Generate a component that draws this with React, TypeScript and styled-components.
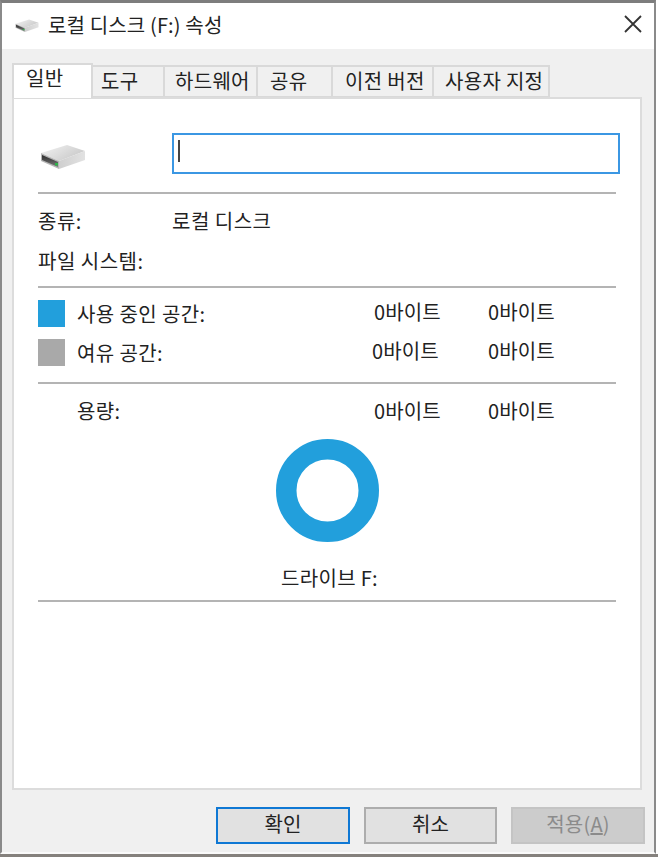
import React from 'react';
import styled, { createGlobalStyle } from 'styled-components';

const Global = createGlobalStyle`
  html, body { margin: 0; padding: 0; background: #fff; }
  body { font-family: "Noto Sans CJK KR", "Noto Sans", sans-serif; color: #222; }
  #root { width: 658px; height: 857px; display: flex; flex-direction: column; }
`;

const Window = styled.div`
  box-sizing: border-box;
  width: 656px;
  height: 854px;
  flex: none;
  border: 2px solid #8a8a8a;
  border-top: 3px solid #7d7d7d;
  border-bottom: 2px solid #fafafa;
  background: #f0f0f0;
  display: flex;
  flex-direction: column;
`;

const DesktopEdge = styled.div`
  height: 3px;
  flex: none;
  background: #85817d;
`;

const TitleBar = styled.div`
  height: 46px;
  flex: none;
  background: #fff;
  display: flex;
  align-items: center;
  padding: 0 12px 0 13px;
  gap: 9px;
`;

const TitleText = styled.span`
  font-size: 20px;
  line-height: 46px;
  letter-spacing: 0.15px;
  flex: 1;
  margin-top: -3px;
`;

const CloseButton = styled.span`
  display: flex;
  margin-top: -5px;
`;

const Body = styled.div`
  flex: 1;
  display: flex;
  flex-direction: column;
  padding: 14px 9px 0 10px;
`;

const TabStrip = styled.div`
  display: flex;
  align-items: flex-end;
  height: 35px;
  position: relative;
  z-index: 1;
  margin-bottom: -1px;
`;

const Tab = styled.div<{ $w: number; $pad: number; $active?: boolean }>`
  box-sizing: border-box;
  width: ${p => p.$w}px;
  height: ${p => (p.$active ? 35 : 32)}px;
  margin-bottom: ${p => (p.$active ? 0 : 1)}px;
  padding-left: ${p => p.$pad}px;
  border: 2px solid #d9d9d9;
  border-left-width: ${p => (p.$active ? 2 : 0)}px;
  border-bottom-width: ${p => (p.$active ? 0 : 1)}px;
  background: ${p => (p.$active ? '#fff' : '#f0f0f0')};
  font-size: 20px;
  letter-spacing: 0.3px;
  line-height: ${p => (p.$active ? 25 : 27)}px;
  white-space: nowrap;
`;

const Panel = styled.div`
  box-sizing: border-box;
  width: 630px;
  height: 693px;
  border: 2px solid #dcdcdc;
  background: #fff;
  padding: 34px 24px 0 24px;
  display: flex;
  flex-direction: column;
`;

const NameRow = styled.div`
  display: flex;
  align-items: center;
  height: 40px;
`;

const DriveBox = styled.div`
  width: 134px;
  flex: none;
  padding-left: 2px;
  box-sizing: border-box;
  display: flex;
  align-items: center;
  padding-top: 8px;
`;

const NameInput = styled.div`
  box-sizing: border-box;
  width: 448px;
  height: 41px;
  flex: none;
  margin-right: -4px;
  border: 2px solid #3b97e3;
  display: flex;
  align-items: center;
  padding: 0 0 4px 4px;
`;

const Caret = styled.span`
  width: 2px;
  height: 22px;
  background: #444;
`;

const Rule = styled.div<{ $top: number }>`
  height: 2px;
  flex: none;
  margin-top: ${p => p.$top}px;
  width: 578px;
  background: #b4b4b4;
`;

const InfoRow = styled.div<{ $top: number }>`
  display: flex;
  height: 26px;
  align-items: center;
  margin-top: ${p => p.$top}px;
  font-size: 20px;
  line-height: 20px;
  letter-spacing: 0.5px;
  white-space: nowrap;
`;

const InfoLabel = styled.span`
  width: 134px;
  flex: none;
`;

const UsageGrid = styled.div<{ $top: number }>`
  display: grid;
  grid-template-columns: 40px 296px 114px 100px;
  align-items: center;
  height: 27px;
  margin-top: ${p => p.$top}px;
  font-size: 20px;
  line-height: 20px;
  letter-spacing: 0.1px;
  white-space: nowrap;
`;

const Swatch = styled.span<{ $color?: string }>`
  width: 27px;
  height: 27px;
  background: ${p => p.$color || 'transparent'};
  display: block;
`;

const UsageLabel = styled.span`
  letter-spacing: 0.4px;
  margin-left: -1px;
`;

const Value = styled.span<{ $shift?: number; $lift?: number }>`
  margin-left: ${p => p.$shift || 0}px;
  margin-bottom: ${p => p.$lift || 0}px;
`;

const DonutWrap = styled.div`
  display: flex;
  justify-content: center;
  margin-top: 15px;
  width: 578px;
`;

const DriveLabel = styled.div`
  box-sizing: border-box;
  width: 578px;
  padding-left: 5px;
  text-align: center;
  font-size: 20px;
  letter-spacing: 0.3px;
  line-height: 26px;
  margin-top: 23px;
`;

const Footer = styled.div`
  display: flex;
  justify-content: flex-end;
  gap: 14px;
  margin-top: 17px;
`;

const Btn = styled.div<{ $w: number; $primary?: boolean; $disabled?: boolean }>`
  box-sizing: border-box;
  width: ${p => p.$w}px;
  height: 37px;
  background: ${p => (p.$disabled ? '#cccccc' : '#e1e1e1')};
  border: 2px solid ${p => (p.$primary ? '#0f78d4' : p.$disabled ? '#c4c4c4' : '#adadad')};
  box-shadow: ${p => (p.$primary ? 'inset 0 0 0 1px #e1e1e1' : 'none')};
  color: ${p => (p.$disabled ? '#8b8b8b' : '#222')};
  font-size: 20px;
  letter-spacing: 0.2px;
  line-height: 30px;
  text-align: center;
`;

const Underlined = styled.span`
  text-decoration: underline;
`;

const DriveIcon = ({ id, width }: { id: string; width: number }) => (
  <svg width={width} height={(width * 26) / 46} viewBox="0 0 46 26">
    <defs>
      <linearGradient id={`${id}-top`} x1="0" y1="0" x2="1" y2="0.6">
        <stop offset="0" stopColor="#f4f4f4" />
        <stop offset="1" stopColor="#c9c9c9" />
      </linearGradient>
      <linearGradient id={`${id}-side`} x1="0" y1="0" x2="1" y2="0">
        <stop offset="0" stopColor="#cfcfcf" />
        <stop offset="1" stopColor="#e2e2e2" />
      </linearGradient>
      <linearGradient id={`${id}-front`} x1="0" y1="0" x2="0" y2="1">
        <stop offset="0" stopColor="#2b2b2b" />
        <stop offset="1" stopColor="#7c7c7c" />
      </linearGradient>
      <filter id={`${id}-soft`} x="-5%" y="-5%" width="110%" height="110%">
        <feGaussianBlur stdDeviation="0.4" />
      </filter>
    </defs>
    <g filter={`url(#${id}-soft)`}>
      <path d="M1 9 L27 1 L45 7 L19 17 Z" fill={`url(#${id}-top)`} />
      <path d="M19 17 L45 7 L45 16 L19 25 Z" fill={`url(#${id}-side)`} />
      <path d="M1 9 L19 17 L19 25 L1 17 Z" fill="#b5b5b5" />
      <path d="M2 11 L18 18 L18 23 L2 16 Z" fill={`url(#${id}-front)`} />
      <rect x="15" y="19" width="3" height="2.5" fill="#2fb54a" />
    </g>
  </svg>
);

const CloseIcon = () => (
  <svg width="18" height="18" viewBox="0 0 18 18">
    <path d="M1 1 L17 17 M17 1 L1 17" stroke="#333" strokeWidth="1.8" fill="none" />
  </svg>
);

const Donut = () => (
  <svg width="103" height="103" viewBox="0 0 103 103">
    <circle cx="51.5" cy="51.5" r="41.25" fill="none" stroke="#229fdc" strokeWidth="20.5" />
  </svg>
);

export default function App() {
  return (
    <>
      <Global />
      <Window>
        <TitleBar>
          <DriveIcon id="small" width={24} />
          <TitleText>로컬 디스크 (F:) 속성</TitleText>
          <CloseButton><CloseIcon /></CloseButton>
        </TitleBar>
        <Body>
          <TabStrip>
            <Tab $w={81} $pad={12} $active>일반</Tab>
            <Tab $w={72} $pad={8}>도구</Tab>
            <Tab $w={93} $pad={10}>하드웨어</Tab>
            <Tab $w={75} $pad={12}>공유</Tab>
            <Tab $w={101} $pad={12}>이전 버전</Tab>
            <Tab $w={116} $pad={11}>사용자 지정</Tab>
          </TabStrip>
          <Panel>
            <NameRow>
              <DriveBox><DriveIcon id="large" width={46} /></DriveBox>
              <NameInput><Caret /></NameInput>
            </NameRow>
            <Rule $top={19} />
            <InfoRow $top={14}>
              <InfoLabel>종류:</InfoLabel>
              <span>로컬 디스크</span>
            </InfoRow>
            <InfoRow $top={14}>
              <InfoLabel>파일 시스템:</InfoLabel>
            </InfoRow>
            <Rule $top={12} />
            <UsageGrid $top={12}>
              <Swatch $color="#229fdc" />
              <UsageLabel>사용 중인 공간:</UsageLabel>
              <Value $lift={3}>0바이트</Value>
              <Value $lift={3}>0바이트</Value>
            </UsageGrid>
            <UsageGrid $top={12}>
              <Swatch $color="#a9a9a9" />
              <UsageLabel>여유 공간:</UsageLabel>
              <Value $shift={-2} $lift={3}>0바이트</Value>
              <Value $lift={3}>0바이트</Value>
            </UsageGrid>
            <Rule $top={16} />
            <UsageGrid $top={13}>
              <Swatch />
              <UsageLabel>용량:</UsageLabel>
              <Value>0바이트</Value>
              <Value>0바이트</Value>
            </UsageGrid>
            <DonutWrap><Donut /></DonutWrap>
            <DriveLabel>드라이브 F:</DriveLabel>
            <Rule $top={9} />
          </Panel>
          <Footer>
            <Btn $w={134} $primary>확인</Btn>
            <Btn $w={133}>취소</Btn>
            <Btn $w={134} $disabled>적용(<Underlined>A</Underlined>)</Btn>
          </Footer>
        </Body>
      </Window>
      <DesktopEdge />
    </>
  );
}
